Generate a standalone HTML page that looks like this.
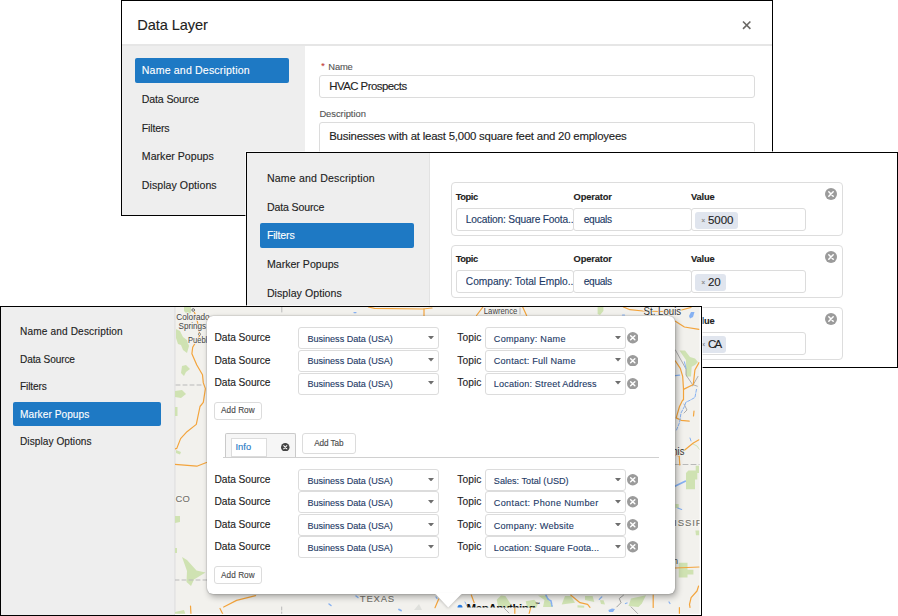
<!DOCTYPE html>
<html><head><meta charset="utf-8"><title>Data Layer</title>
<style>
*{box-sizing:border-box;margin:0;padding:0}
html,body{width:898px;height:616px;overflow:hidden;background:#fff;font-family:"Liberation Sans",sans-serif;color:#222}
.p{position:absolute;border:1px solid #000;background:#fff;overflow:hidden;box-shadow:0 0 0 1px rgba(255,255,255,.6)}
.a{position:absolute;white-space:nowrap;line-height:1}
.t{-webkit-text-stroke:0.12px currentColor}
.side{position:absolute;background:#eeeeee}
.sel{position:absolute;background:#1e79c4;border-radius:2px}
.inp{position:absolute;border:1px solid #dcdcdc;border-radius:3px;background:#fff;overflow:hidden}
.card{position:absolute;border:1px solid #dddddd;border-radius:4px;background:#fff}
.chip{position:absolute;background:#e0e5ee;border-radius:3px}
.btn{position:absolute;border:1px solid #dcdcdc;border-radius:3px;background:#fff}
.b{font-weight:bold}
</style></head><body>
<div class="p" style="left:121px;top:0px;width:652px;height:216px">
<div class="a t " style="left:15.30px;top:16px;font-size:14.6px;line-height:16px;height:16px;letter-spacing:-0.091px;">Data Layer</div>
<svg class="a" style="left:619px;top:18px" width="12" height="12" viewBox="0 0 12 12"><path d="M2.0 2.5L9.4 9.9M9.4 2.5L2.0 9.9" stroke="#6b6966" stroke-width="1.6" fill="none"/></svg>
<div class="a" style="left:0px;top:43px;width:650px;height:2px;background:#e6e6e6"></div>
<div class="side" style="left:0px;top:45px;width:183px;height:169px;"></div>
<div class="sel" style="left:13px;top:57px;width:154px;height:25px;"></div>
<div class="a t " style="left:19.80px;top:63px;font-size:10.6px;line-height:12px;height:12px;color:#fff;letter-spacing:0.159px;">Name and Description</div>
<div class="a t " style="left:19.80px;top:92px;font-size:10.6px;line-height:12px;height:12px;letter-spacing:-0.142px;">Data Source</div>
<div class="a t " style="left:19.80px;top:121px;font-size:10.6px;line-height:12px;height:12px;letter-spacing:-0.176px;">Filters</div>
<div class="a t " style="left:19.80px;top:149px;font-size:10.6px;line-height:12px;height:12px;letter-spacing:0.010px;">Marker Popups</div>
<div class="a t " style="left:19.80px;top:178px;font-size:10.6px;line-height:12px;height:12px;letter-spacing:0.048px;">Display Options</div>
<div class="a t " style="left:199.20px;top:60px;font-size:9px;line-height:10px;height:10px;color:#c23934;">*</div>
<div class="a t " style="left:206.30px;top:60px;font-size:9.4px;line-height:11px;height:11px;color:#555;letter-spacing:-0.192px;">Name</div>
<div class="inp" style="left:197px;top:74px;width:436px;height:23px;"></div>
<div class="a t " style="left:207.20px;top:79px;font-size:11.4px;line-height:12px;height:12px;letter-spacing:-0.514px;">HVAC Prospects</div>
<div class="a t " style="left:197.40px;top:107px;font-size:9.4px;line-height:11px;height:11px;color:#555;letter-spacing:-0.042px;">Description</div>
<div class="inp" style="left:197px;top:121px;width:436px;height:68px;"></div>
<div class="a t " style="left:207.20px;top:129px;font-size:11.4px;line-height:12px;height:12px;letter-spacing:-0.209px;">Businesses with at least 5,000 square feet and 20 employees</div>
</div>
<div class="p" style="left:246px;top:152px;width:652px;height:216px">
<div class="side" style="left:0px;top:0px;width:183px;height:214px;border-right:1px solid #e2e2e2"></div>
<div class="sel" style="left:13px;top:70px;width:154px;height:25px;"></div>
<div class="a t " style="left:19.90px;top:19px;font-size:10.6px;line-height:12px;height:12px;letter-spacing:0.159px;">Name and Description</div>
<div class="a t " style="left:19.90px;top:48px;font-size:10.6px;line-height:12px;height:12px;letter-spacing:-0.142px;">Data Source</div>
<div class="a t " style="left:19.90px;top:76px;font-size:10.6px;line-height:12px;height:12px;color:#fff;letter-spacing:-0.176px;">Filters</div>
<div class="a t " style="left:19.90px;top:105px;font-size:10.6px;line-height:12px;height:12px;letter-spacing:0.010px;">Marker Popups</div>
<div class="a t " style="left:19.90px;top:134px;font-size:10.6px;line-height:12px;height:12px;letter-spacing:0.048px;">Display Options</div>
<div class="card" style="left:204px;top:29px;width:392px;height:54px;"></div>
<div class="a t b" style="left:208.70px;top:39px;font-size:9.3px;line-height:10px;height:10px;color:#222;letter-spacing:-0.427px;">Topic</div>
<div class="a t b" style="left:326.60px;top:39px;font-size:9.3px;line-height:10px;height:10px;color:#222;letter-spacing:-0.139px;">Operator</div>
<div class="a t b" style="left:444.10px;top:39px;font-size:9.3px;line-height:10px;height:10px;color:#222;letter-spacing:-0.200px;">Value</div>
<div class="inp" style="left:209px;top:55px;width:118px;height:23px;"></div>
<div class="inp" style="left:326px;top:55px;width:119px;height:23px;"></div>
<div class="inp" style="left:444px;top:55px;width:115px;height:23px;"></div>
<div class="a t " style="left:218.80px;top:61px;font-size:10.2px;line-height:11px;height:11px;color:#1d3a66;letter-spacing:-0.168px;width:107.4px;overflow:hidden;">Location: Square Foota...</div>
<div class="a t " style="left:336.70px;top:61px;font-size:10.2px;line-height:11px;height:11px;color:#1d3a66;letter-spacing:-0.311px;">equals</div>
<div class="chip" style="left:448px;top:59px;width:43px;height:17px;"></div>
<div class="a t " style="left:454.20px;top:64px;font-size:7px;line-height:7px;height:7px;color:#888;">×</div>
<div class="a t " style="left:461.00px;top:61px;font-size:11.5px;line-height:12px;height:12px;color:#222;letter-spacing:-0.061px;">5000</div>
<svg class="a" style="left:578.3px;top:35.4px" width="12" height="12" viewBox="0 0 12 12"><circle cx="6" cy="6" r="6" fill="#9b9b9b"/><path d="M3.8 3.8L8.2 8.2M8.2 3.8L3.8 8.2" stroke="#fff" stroke-width="1.5" stroke-linecap="round"/></svg>
<div class="card" style="left:204px;top:92px;width:392px;height:53px;"></div>
<div class="a t b" style="left:208.70px;top:101px;font-size:9.3px;line-height:10px;height:10px;color:#222;letter-spacing:-0.427px;">Topic</div>
<div class="a t b" style="left:326.60px;top:101px;font-size:9.3px;line-height:10px;height:10px;color:#222;letter-spacing:-0.139px;">Operator</div>
<div class="a t b" style="left:444.10px;top:101px;font-size:9.3px;line-height:10px;height:10px;color:#222;letter-spacing:-0.200px;">Value</div>
<div class="inp" style="left:209px;top:117px;width:118px;height:23px;"></div>
<div class="inp" style="left:326px;top:117px;width:119px;height:23px;"></div>
<div class="inp" style="left:444px;top:117px;width:115px;height:23px;"></div>
<div class="a t " style="left:218.80px;top:123px;font-size:10.2px;line-height:11px;height:11px;color:#1d3a66;letter-spacing:-0.020px;width:107.4px;overflow:hidden;">Company: Total Emplo...</div>
<div class="a t " style="left:336.70px;top:123px;font-size:10.2px;line-height:11px;height:11px;color:#1d3a66;letter-spacing:-0.311px;">equals</div>
<div class="chip" style="left:448px;top:121px;width:30.5px;height:17px;"></div>
<div class="a t " style="left:454.20px;top:126px;font-size:7px;line-height:7px;height:7px;color:#888;">×</div>
<div class="a t " style="left:461.00px;top:123px;font-size:11.5px;line-height:12px;height:12px;color:#222;letter-spacing:-0.092px;">20</div>
<svg class="a" style="left:578.3px;top:98.4px" width="12" height="12" viewBox="0 0 12 12"><circle cx="6" cy="6" r="6" fill="#9b9b9b"/><path d="M3.8 3.8L8.2 8.2M8.2 3.8L3.8 8.2" stroke="#fff" stroke-width="1.5" stroke-linecap="round"/></svg>
<div class="card" style="left:204px;top:154px;width:392px;height:53px;"></div>
<div class="a t b" style="left:208.70px;top:163px;font-size:9.3px;line-height:10px;height:10px;color:#222;letter-spacing:-0.427px;">Topic</div>
<div class="a t b" style="left:326.60px;top:163px;font-size:9.3px;line-height:10px;height:10px;color:#222;letter-spacing:-0.139px;">Operator</div>
<div class="a t b" style="left:444.10px;top:163px;font-size:9.3px;line-height:10px;height:10px;color:#222;letter-spacing:-0.200px;">Value</div>
<div class="inp" style="left:209px;top:179px;width:118px;height:23px;"></div>
<div class="inp" style="left:326px;top:179px;width:119px;height:23px;"></div>
<div class="inp" style="left:444px;top:179px;width:115px;height:23px;"></div>
<div class="a t " style="left:218.80px;top:185px;font-size:10.2px;line-height:11px;height:11px;color:#1d3a66;width:107.4px;overflow:hidden;">Location: State</div>
<div class="a t " style="left:336.70px;top:185px;font-size:10.2px;line-height:11px;height:11px;color:#1d3a66;letter-spacing:-0.311px;">equals</div>
<div class="chip" style="left:448px;top:183px;width:31px;height:17px;"></div>
<div class="a t " style="left:454.20px;top:188px;font-size:7px;line-height:7px;height:7px;color:#888;">×</div>
<div class="a t " style="left:461.00px;top:185px;font-size:11.5px;line-height:12px;height:12px;color:#222;letter-spacing:-1.775px;">CA</div>
<svg class="a" style="left:578.3px;top:160.4px" width="12" height="12" viewBox="0 0 12 12"><circle cx="6" cy="6" r="6" fill="#9b9b9b"/><path d="M3.8 3.8L8.2 8.2M8.2 3.8L3.8 8.2" stroke="#fff" stroke-width="1.5" stroke-linecap="round"/></svg>
</div>
<div class="p" style="left:0px;top:306px;width:702px;height:310px">
<div class="side" style="left:0px;top:0px;width:174px;height:308px;border-right:1px solid #e4e4e4"></div>
<div class="sel" style="left:12px;top:95px;width:148px;height:24px;"></div>
<div class="a t " style="left:19.00px;top:19px;font-size:10.1px;line-height:11px;height:11px;letter-spacing:0.146px;">Name and Description</div>
<div class="a t " style="left:19.00px;top:47px;font-size:10.1px;line-height:11px;height:11px;letter-spacing:-0.114px;">Data Source</div>
<div class="a t " style="left:19.00px;top:74px;font-size:10.1px;line-height:11px;height:11px;letter-spacing:-0.116px;">Filters</div>
<div class="a t " style="left:19.00px;top:102px;font-size:10.1px;line-height:11px;height:11px;color:#fff;letter-spacing:0.068px;">Marker Popups</div>
<div class="a t " style="left:19.00px;top:129px;font-size:10.1px;line-height:11px;height:11px;letter-spacing:0.062px;">Display Options</div>
<svg class="a" style="left:174px;top:0px" width="526" height="309" viewBox="175 307 526 309">
<rect x="175" y="307" width="526" height="309" fill="#f2f1ed"/>
<rect x="175" y="307" width="0.6" height="309" fill="#e2e2e2"/>
<polygon points="184,307 191,307 191,313 187,314 184,311" fill="#cfe2b2"/>
<polygon points="176,329 180,331 183,337 187,340 189,346 187,353 183,350 181,345 178,344 176,338" fill="#cfe2b2"/>
<polygon points="182,366 186,365 190,369 186,372 184,376 181,373" fill="#cfe2b2"/>
<polygon points="175,391 182,390 186,394 181,398 175,397" fill="#cfe2b2"/>
<polygon points="175,407 177.5,407 177.5,416 175,416" fill="#cfe2b2"/>
<polygon points="176,450 181,452 180,454.5 176,453" fill="#cfe2b2"/>
<polygon points="175,516 180,516 180,522 175,523" fill="#cfe2b2"/>
<polygon points="175,548 177,548 177,553 175,553" fill="#cfe2b2"/>
<polygon points="182,557 187,560 196.5,570.5 205.5,572.5 194,579.5 191,586 186.5,582 187,571" fill="#cfe2b2"/>
<polygon points="175,612 184,610 186,616 175,616" fill="#cfe2b2"/>
<polygon points="496.7,599.8 501,595.4 505.4,596 511.2,604.8 509,608 498,606" fill="#cfe2b2"/>
<polygon points="525.7,601.2 534.3,599.8 538,604 536,608 527,607" fill="#cfe2b2"/>
<polygon points="538,595.4 546,595.4 553.2,607 543,607 544.5,600" fill="#cfe2b2"/>
<polygon points="561.7,604.4 565,596 570.9,596 575,602.7" fill="#cfe2b2"/>
<polygon points="577.5,605.2 584.2,605.8 584.2,607.7 577.5,607.5" fill="#cfe2b2"/>
<polygon points="585,596 592.6,596 594.3,601.9 585,600" fill="#cfe2b2"/>
<polygon points="600,600.2 603.5,600.2 605,604.4 601,604" fill="#cfe2b2"/>
<polygon points="628.5,606 631,598.5 646,595.2 641.9,603.5 638.5,606.9" fill="#cfe2b2"/>
<polygon points="679.5,350.5 685,350.5 690,357 695,358.5 698,362 695,365 691.7,366.7 691,376.5 686,376.5 686,360 682.7,355.3" fill="#cfe2b2"/>
<polygon points="688.4,470.6 695.7,470.6 695.7,465.7 699,465.7 699,473 697.3,473 697.3,479.5 695,479.5 695,489.3 686,489.3 686,473" fill="#cfe2b2"/>
<polygon points="675.5,504 678.7,504 678.7,508 675.5,508" fill="#cfe2b2"/>
<polygon points="695.4,530.4 699.3,530.4 699.3,535.3 696,535.3" fill="#cfe2b2"/>
<polygon points="678.7,562.8 687.5,562.8 687.5,569.7 693.4,569.7 693.4,574.6 687.5,574.6 687.5,577.5 678.7,577.5" fill="#cfe2b2"/>
<polyline points="693,444 697,446 699.5,449.5" fill="none" stroke="#cfe2b2" stroke-width="1" stroke-linejoin="round" stroke-linecap="round" />
<polyline points="176,385 204,385" fill="none" stroke="#b9b9b9" stroke-width="1" stroke-linejoin="round" stroke-linecap="round" stroke-dasharray="4 3"/>
<polyline points="175,580 208,580" fill="none" stroke="#b9b9b9" stroke-width="1" stroke-linejoin="round" stroke-linecap="round" stroke-dasharray="4 3"/>
<polyline points="675,464.5 700,464.5" fill="none" stroke="#b9b9b9" stroke-width="1" stroke-linejoin="round" stroke-linecap="round" stroke-dasharray="5 3"/>
<polyline points="281.7,607 281.7,616" fill="none" stroke="#b9b9b9" stroke-width="1" stroke-linejoin="round" stroke-linecap="round" stroke-dasharray="3 2"/>
<polyline points="675.4,350 686,369 686,375 692.5,384.5 697.3,386.2" fill="none" stroke="#9a9a9a" stroke-width="0.8" stroke-linejoin="round" stroke-linecap="round" />
<polyline points="698,376.4 692.5,386" fill="none" stroke="#9a9a9a" stroke-width="0.8" stroke-linejoin="round" stroke-linecap="round" />
<polyline points="684,404 687,410 684,413" fill="none" stroke="#9a9a9a" stroke-width="0.8" stroke-linejoin="round" stroke-linecap="round" />
<polyline points="194.4,312.3 197,320 199.2,329.4 199.5,336 192.7,347.2 191.9,353.7 196.8,365 202.5,374.8 203.3,382.9 205.4,388.6 203.3,402.4 200,406.5 196.3,424.4 187,431.7 180.6,438.6 176.8,448.4 175,449" fill="none" stroke="#f3a43c" stroke-width="1.2" stroke-linejoin="round" stroke-linecap="round" />
<polyline points="175,464.4 196.8,466.2 206.5,462.5" fill="none" stroke="#f3a43c" stroke-width="1.2" stroke-linejoin="round" stroke-linecap="round" />
<polyline points="223,614.5 220,608.5" fill="none" stroke="#f3a43c" stroke-width="1.2" stroke-linejoin="round" stroke-linecap="round" />
<polyline points="223.7,607 236.6,600.4 255.6,595.6" fill="none" stroke="#f3a43c" stroke-width="1.2" stroke-linejoin="round" stroke-linecap="round" />
<polyline points="190.5,606 191,615" fill="none" stroke="#f3a43c" stroke-width="1.2" stroke-linejoin="round" stroke-linecap="round" />
<polyline points="368.4,307 374.4,308.4 422.6,309 432,308" fill="none" stroke="#f3a43c" stroke-width="1.2" stroke-linejoin="round" stroke-linecap="round" />
<polyline points="424,309 424,316" fill="none" stroke="#f3a43c" stroke-width="1.2" stroke-linejoin="round" stroke-linecap="round" />
<polyline points="476.5,315.5 483,307" fill="none" stroke="#f3a43c" stroke-width="1.2" stroke-linejoin="round" stroke-linecap="round" />
<polyline points="522.7,307 526.6,315.5" fill="none" stroke="#f3a43c" stroke-width="1.2" stroke-linejoin="round" stroke-linecap="round" />
<polyline points="623.4,307 629.9,309.7 642.8,311 660,311.5 672,311 681.5,310 691,307.5" fill="none" stroke="#f3a43c" stroke-width="1.2" stroke-linejoin="round" stroke-linecap="round" />
<polyline points="675.4,321.2 684.4,327 699,329.4" fill="none" stroke="#f3a43c" stroke-width="1.2" stroke-linejoin="round" stroke-linecap="round" />
<polyline points="281.8,307 281.8,312" fill="none" stroke="#b9b9b9" stroke-width="1" stroke-linejoin="round" stroke-linecap="round" />
<polyline points="520,308 520,314" fill="none" stroke="#b9b9b9" stroke-width="1" stroke-linejoin="round" stroke-linecap="round" />
<polygon points="597.6,307 603.4,307 603.4,311 600,315 597.6,314" fill="#cfe2b2"/>
<polyline points="354,312.6 356,312.6" fill="none" stroke="#86b1f2" stroke-width="1.2" stroke-linejoin="round" stroke-linecap="round" />
<polyline points="622.5,315 624.5,315" fill="none" stroke="#86b1f2" stroke-width="1.2" stroke-linejoin="round" stroke-linecap="round" />
<polyline points="675.4,361 680.3,368.3 682.7,376.4 683.5,389.4 683.5,400 682.7,400 679.5,406.5 676.2,417.9 681.1,420.3 689.2,421.1" fill="none" stroke="#f3a43c" stroke-width="1.2" stroke-linejoin="round" stroke-linecap="round" />
<polyline points="699,362.6 694.9,370 693.3,384.5 683.5,389.4" fill="none" stroke="#f3a43c" stroke-width="1.2" stroke-linejoin="round" stroke-linecap="round" />
<polyline points="694,411 693.5,416" fill="none" stroke="#f3a43c" stroke-width="1.2" stroke-linejoin="round" stroke-linecap="round" />
<polyline points="699,439.8 693.3,443 684.4,450.3 675.4,455.2 679.2,456 679.8,465" fill="none" stroke="#f3a43c" stroke-width="1.2" stroke-linejoin="round" stroke-linecap="round" />
<polyline points="675,568 699.3,567" fill="none" stroke="#f3a43c" stroke-width="1.2" stroke-linejoin="round" stroke-linecap="round" />
<polyline points="471.3,595 474.2,602.7" fill="none" stroke="#f3a43c" stroke-width="1.2" stroke-linejoin="round" stroke-linecap="round" />
<polyline points="438.7,599 435,607.7" fill="none" stroke="#f3a43c" stroke-width="1.2" stroke-linejoin="round" stroke-linecap="round" />
<polyline points="514.8,608 514.8,616" fill="none" stroke="#f3a43c" stroke-width="1.2" stroke-linejoin="round" stroke-linecap="round" />
<polyline points="530.7,607.7 528.5,616" fill="none" stroke="#f3a43c" stroke-width="1.2" stroke-linejoin="round" stroke-linecap="round" />
<polyline points="570.9,595.2 580,602.7 587.6,604.4 590,607.4" fill="none" stroke="#f3a43c" stroke-width="1.2" stroke-linejoin="round" stroke-linecap="round" />
<polyline points="653.2,595 653.2,607.4" fill="none" stroke="#f3a43c" stroke-width="1.2" stroke-linejoin="round" stroke-linecap="round" />
<polyline points="504,608 509,613" fill="none" stroke="#9a9a9a" stroke-width="0.8" stroke-linejoin="round" stroke-linecap="round" />
<polyline points="623.5,595.2 619.3,598.5 621,602.7 616.8,606.9" fill="none" stroke="#8a8a8a" stroke-width="0.8" stroke-linejoin="round" stroke-linecap="round" />
<polyline points="631,606.9 638.5,614.4" fill="none" stroke="#9a9a9a" stroke-width="0.8" stroke-linejoin="round" stroke-linecap="round" />
<polygon points="689,316 691,312 694.5,312 693,317 690,318.5" fill="#86b1f2"/>
<polyline points="684.4,361.8 686,368.3" fill="none" stroke="#86b1f2" stroke-width="1" stroke-linejoin="round" stroke-linecap="round" />
<polyline points="696.5,389.4 694.9,397.5 689,400.8 686,402 684.4,406.5 681,413 679.5,422.7 676.2,430.8" fill="none" stroke="#86b1f2" stroke-width="1" stroke-linejoin="round" stroke-linecap="round" stroke-dasharray="3 1.5"/>
<polyline points="675.4,375.6 679.5,375.2" fill="none" stroke="#86b1f2" stroke-width="1.2" stroke-linejoin="round" stroke-linecap="round" />
<polyline points="675.4,486 685.2,481.2" fill="none" stroke="#86b1f2" stroke-width="1.8" stroke-linejoin="round" stroke-linecap="round" />
<polyline points="677.7,508 681.6,509.5" fill="none" stroke="#86b1f2" stroke-width="1.2" stroke-linejoin="round" stroke-linecap="round" />
<polyline points="690,438 691,441" fill="none" stroke="#86b1f2" stroke-width="1" stroke-linejoin="round" stroke-linecap="round" />
<polyline points="329,604 331,605.5" fill="none" stroke="#86b1f2" stroke-width="1.5" stroke-linejoin="round" stroke-linecap="round" />
<polyline points="356,596 358,597.5" fill="none" stroke="#86b1f2" stroke-width="1.5" stroke-linejoin="round" stroke-linecap="round" />
<polyline points="399,609.5 401,610.5" fill="none" stroke="#86b1f2" stroke-width="1.8" stroke-linejoin="round" stroke-linecap="round" />
<polygon points="414,610 419,604 422,610" fill="#dfe0dc"/>
<polyline points="546,595.4 548,599 551,601 552,606" fill="none" stroke="#86b1f2" stroke-width="1.6" stroke-linejoin="round" stroke-linecap="round" stroke-dasharray="2 1"/>
<polyline points="599.3,599.4 601.8,596.9" fill="none" stroke="#86b1f2" stroke-width="1.3" stroke-linejoin="round" stroke-linecap="round" />
<polygon points="608.4,610 612,608.5 615,609 613,611.9 609,612" fill="#86b1f2"/>
<polyline points="625.5,603.5 627,603" fill="none" stroke="#86b1f2" stroke-width="1.3" stroke-linejoin="round" stroke-linecap="round" />
<polyline points="669,602 670,603.5" fill="none" stroke="#86b1f2" stroke-width="1.2" stroke-linejoin="round" stroke-linecap="round" />
<polyline points="436,597 437,598.5" fill="none" stroke="#86b1f2" stroke-width="1.2" stroke-linejoin="round" stroke-linecap="round" />
<polyline points="465,602 467,606" fill="none" stroke="#86b1f2" stroke-width="1" stroke-linejoin="round" stroke-linecap="round" stroke-dasharray="2 1"/>
<polyline points="679.4,607.7 679.4,616" fill="none" stroke="#f3a43c" stroke-width="1.2" stroke-linejoin="round" stroke-linecap="round" />
<polyline points="698.6,586 697,591 691.1,597.7 689.5,604.4 690,607.4" fill="none" stroke="#f3a43c" stroke-width="1.2" stroke-linejoin="round" stroke-linecap="round" />
<circle cx="193.2" cy="310" r="1.3" fill="#fff" stroke="#444" stroke-width="0.8"/>
<circle cx="199.5" cy="334.2" r="1.1" fill="#fff" stroke="#666" stroke-width="0.7"/>
<text x="176.3" y="320.0" font-size="9" fill="#444" font-family="Liberation Sans, sans-serif" stroke="#f4f3ef" stroke-width="1.4" paint-order="stroke"  textLength="33.3" lengthAdjust="spacingAndGlyphs">Colorado</text>
<text x="178.5" y="329.0" font-size="9" fill="#444" font-family="Liberation Sans, sans-serif" stroke="#f4f3ef" stroke-width="1.4" paint-order="stroke"  textLength="27.6" lengthAdjust="spacingAndGlyphs">Springs</text>
<text x="188" y="343" font-size="9" fill="#444" font-family="Liberation Sans, sans-serif" stroke="#f4f3ef" stroke-width="1.4" paint-order="stroke"  textLength="23.5" lengthAdjust="spacingAndGlyphs">Pueblo</text>
<text x="483.8" y="314" font-size="8.8" fill="#444" font-family="Liberation Sans, sans-serif" stroke="#f4f3ef" stroke-width="1.4" paint-order="stroke"  textLength="33.5" lengthAdjust="spacingAndGlyphs">Lawrence</text>
<text x="643.6" y="314.6" font-size="10.6" fill="#333" font-family="Liberation Sans, sans-serif" stroke="#f4f3ef" stroke-width="1.4" paint-order="stroke"  textLength="37.6" lengthAdjust="spacingAndGlyphs">St. Louis</text>
<text x="646.5" y="454.8" font-size="10.6" fill="#333" font-family="Liberation Sans, sans-serif" stroke="#f4f3ef" stroke-width="1.4" paint-order="stroke"  textLength="37.8" lengthAdjust="spacingAndGlyphs">Memphis</text>
<text x="647" y="564" font-size="9.5" fill="#333" font-family="Liberation Sans, sans-serif" stroke="#f4f3ef" stroke-width="1.4" paint-order="stroke"  textLength="31" lengthAdjust="spacingAndGlyphs">Jackson</text>
<text x="175.6" y="502.4" font-size="9.4" fill="none" font-family="Liberation Sans, sans-serif" stroke="#f6f5f1" stroke-width="2" letter-spacing="0.2">CO</text>
<text x="175.6" y="502.4" font-size="9.4" fill="#73716a" font-family="Liberation Sans, sans-serif" stroke="#73716a" stroke-width="0.12" letter-spacing="0.2">CO</text>
<text x="359.8" y="602" font-size="9.5" fill="none" font-family="Liberation Sans, sans-serif" stroke="#f6f5f1" stroke-width="2" letter-spacing="0.8">TEXAS</text>
<text x="359.8" y="602" font-size="9.5" fill="#73716a" font-family="Liberation Sans, sans-serif" stroke="#73716a" stroke-width="0.12" letter-spacing="0.8">TEXAS</text>
<text x="647.3" y="525.9" font-size="9.5" fill="none" font-family="Liberation Sans, sans-serif" stroke="#f6f5f1" stroke-width="2" letter-spacing="0.9">MISSISSIPPI</text>
<text x="647.3" y="525.9" font-size="9.5" fill="#73716a" font-family="Liberation Sans, sans-serif" stroke="#73716a" stroke-width="0.12" letter-spacing="0.9">MISSISSIPPI</text>
<clipPath id="mc"><rect x="450" y="600" width="110" height="7.6"/></clipPath>
<g clip-path="url(#mc)"><circle cx="460" cy="607.2" r="2.5" fill="#2a7de1"/>
<text x="466.6" y="611.8" font-size="11.6" font-weight="bold" fill="#111" font-family="Liberation Sans, sans-serif" textLength="73.5" lengthAdjust="spacing">MapAnything<tspan font-size="5" dy="-6">™</tspan></text></g>
<rect x="699.6" y="307" width="2" height="309" fill="#fff"/><rect x="175" y="613.8" width="526" height="3" fill="#fff"/>
</svg>
<div class="a" style="left:206px;top:9px;width:468px;height:278px;background:#fff;border-radius:6px;box-shadow:0 0 1.5px rgba(0,0,0,.45),2px 3px 6px rgba(0,0,0,.3)"></div>
<svg class="a" style="left:434px;top:286px;overflow:visible" width="27" height="16" viewBox="0 0 27 16"><defs><filter id="ps" x="-30%" y="-30%" width="160%" height="180%"><feGaussianBlur stdDeviation="1.6"/></filter></defs><path d="M1 2H26L13.2 15.2Z" fill="#000" opacity=".22" filter="url(#ps)"/><path d="M0 0H27V1.3H26.2L13.2 14.4L0.8 1.3H0Z" fill="#fff"/></svg>
<div class="a t " style="left:213.50px;top:25px;font-size:10.2px;line-height:11px;height:11px;color:#222;letter-spacing:-0.060px;">Data Source</div>
<div class="inp" style="left:297px;top:20.3px;width:141px;height:22px;"></div>
<div class="a t " style="left:306.50px;top:27px;font-size:9.1px;line-height:10px;height:10px;color:#1d3a66;letter-spacing:-0.032px;">Business Data (USA)</div>
<svg class="a" style="left:426.8px;top:28.95px" width="6" height="3.5" viewBox="0 0 6 3.5"><path d="M0 0H6L3 3.5Z" fill="#6e6e6e"/></svg>
<div class="a t " style="left:456.30px;top:25px;font-size:10.2px;line-height:11px;height:11px;color:#222;letter-spacing:0.072px;">Topic</div>
<div class="inp" style="left:484px;top:20.3px;width:141px;height:22px;"></div>
<div class="a t " style="left:492.80px;top:27px;font-size:9.1px;line-height:10px;height:10px;color:#1d3a66;letter-spacing:0.285px;">Company: Name</div>
<svg class="a" style="left:613.5px;top:28.95px" width="6" height="3.5" viewBox="0 0 6 3.5"><path d="M0 0H6L3 3.5Z" fill="#6e6e6e"/></svg>
<svg class="a" style="left:625.95px;top:25.35px" width="11.5" height="11.5" viewBox="0 0 12 12"><circle cx="6" cy="6" r="6" fill="#9b9b9b"/><path d="M3.8 3.8L8.2 8.2M8.2 3.8L3.8 8.2" stroke="#fff" stroke-width="1.5" stroke-linecap="round"/></svg>
<div class="a t " style="left:213.50px;top:48px;font-size:10.2px;line-height:11px;height:11px;color:#222;letter-spacing:-0.060px;">Data Source</div>
<div class="inp" style="left:297px;top:42.8px;width:141px;height:22px;"></div>
<div class="a t " style="left:306.50px;top:49px;font-size:9.1px;line-height:10px;height:10px;color:#1d3a66;letter-spacing:-0.032px;">Business Data (USA)</div>
<svg class="a" style="left:426.8px;top:51.45px" width="6" height="3.5" viewBox="0 0 6 3.5"><path d="M0 0H6L3 3.5Z" fill="#6e6e6e"/></svg>
<div class="a t " style="left:456.30px;top:48px;font-size:10.2px;line-height:11px;height:11px;color:#222;letter-spacing:0.072px;">Topic</div>
<div class="inp" style="left:484px;top:42.8px;width:141px;height:22px;"></div>
<div class="a t " style="left:492.80px;top:49px;font-size:9.1px;line-height:10px;height:10px;color:#1d3a66;letter-spacing:0.225px;">Contact: Full Name</div>
<svg class="a" style="left:613.5px;top:51.45px" width="6" height="3.5" viewBox="0 0 6 3.5"><path d="M0 0H6L3 3.5Z" fill="#6e6e6e"/></svg>
<svg class="a" style="left:625.95px;top:47.85px" width="11.5" height="11.5" viewBox="0 0 12 12"><circle cx="6" cy="6" r="6" fill="#9b9b9b"/><path d="M3.8 3.8L8.2 8.2M8.2 3.8L3.8 8.2" stroke="#fff" stroke-width="1.5" stroke-linecap="round"/></svg>
<div class="a t " style="left:213.50px;top:70px;font-size:10.2px;line-height:11px;height:11px;color:#222;letter-spacing:-0.060px;">Data Source</div>
<div class="inp" style="left:297px;top:65.5px;width:141px;height:22px;"></div>
<div class="a t " style="left:306.50px;top:72px;font-size:9.1px;line-height:10px;height:10px;color:#1d3a66;letter-spacing:-0.032px;">Business Data (USA)</div>
<svg class="a" style="left:426.8px;top:74.15px" width="6" height="3.5" viewBox="0 0 6 3.5"><path d="M0 0H6L3 3.5Z" fill="#6e6e6e"/></svg>
<div class="a t " style="left:456.30px;top:70px;font-size:10.2px;line-height:11px;height:11px;color:#222;letter-spacing:0.072px;">Topic</div>
<div class="inp" style="left:484px;top:65.5px;width:141px;height:22px;"></div>
<div class="a t " style="left:492.80px;top:72px;font-size:9.1px;line-height:10px;height:10px;color:#1d3a66;letter-spacing:0.163px;">Location: Street Address</div>
<svg class="a" style="left:613.5px;top:74.15px" width="6" height="3.5" viewBox="0 0 6 3.5"><path d="M0 0H6L3 3.5Z" fill="#6e6e6e"/></svg>
<svg class="a" style="left:625.95px;top:70.55px" width="11.5" height="11.5" viewBox="0 0 12 12"><circle cx="6" cy="6" r="6" fill="#9b9b9b"/><path d="M3.8 3.8L8.2 8.2M8.2 3.8L3.8 8.2" stroke="#fff" stroke-width="1.5" stroke-linecap="round"/></svg>
<div class="btn" style="left:213px;top:95px;width:48px;height:17.5px;"></div>
<div class="a t " style="left:220.00px;top:99px;font-size:8.2px;line-height:9px;height:9px;color:#4a4a4a;letter-spacing:0.071px;">Add Row</div>
<div class="a" style="left:224px;top:126px;width:71px;height:25px;background:#f6f6f6;border:1px solid #cacaca;border-bottom:none;border-radius:2px 2px 0 0"></div>
<div class="a" style="left:222px;top:150px;width:436px;height:1px;background:#d0d0d0"></div>
<div class="inp" style="left:230px;top:131px;width:36px;height:18.5px;border-radius:0"></div>
<div class="a t " style="left:234.40px;top:135px;font-size:9.3px;line-height:10px;height:10px;color:#1e79c4;letter-spacing:0.063px;">Info</div>
<svg class="a" style="left:280.45px;top:135.65px" width="8.5" height="8.5" viewBox="0 0 12 12"><circle cx="6" cy="6" r="6" fill="#444"/><path d="M3.8 3.8L8.2 8.2M8.2 3.8L3.8 8.2" stroke="#fff" stroke-width="1.5" stroke-linecap="round"/></svg>
<div class="btn" style="left:301px;top:126px;width:54px;height:21px;"></div>
<div class="a t " style="left:313.20px;top:132px;font-size:8.2px;line-height:9px;height:9px;color:#4a4a4a;letter-spacing:-0.074px;">Add Tab</div>
<div class="a t " style="left:213.50px;top:167px;font-size:10.2px;line-height:11px;height:11px;color:#222;letter-spacing:-0.060px;">Data Source</div>
<div class="inp" style="left:297px;top:162px;width:141px;height:22px;"></div>
<div class="a t " style="left:306.50px;top:169px;font-size:9.1px;line-height:10px;height:10px;color:#1d3a66;letter-spacing:-0.032px;">Business Data (USA)</div>
<svg class="a" style="left:426.8px;top:170.65px" width="6" height="3.5" viewBox="0 0 6 3.5"><path d="M0 0H6L3 3.5Z" fill="#6e6e6e"/></svg>
<div class="a t " style="left:456.30px;top:167px;font-size:10.2px;line-height:11px;height:11px;color:#222;letter-spacing:0.072px;">Topic</div>
<div class="inp" style="left:484px;top:162px;width:141px;height:22px;"></div>
<div class="a t " style="left:492.80px;top:169px;font-size:9.1px;line-height:10px;height:10px;color:#1d3a66;letter-spacing:0.013px;">Sales: Total (USD)</div>
<svg class="a" style="left:613.5px;top:170.65px" width="6" height="3.5" viewBox="0 0 6 3.5"><path d="M0 0H6L3 3.5Z" fill="#6e6e6e"/></svg>
<svg class="a" style="left:625.95px;top:167.05px" width="11.5" height="11.5" viewBox="0 0 12 12"><circle cx="6" cy="6" r="6" fill="#9b9b9b"/><path d="M3.8 3.8L8.2 8.2M8.2 3.8L3.8 8.2" stroke="#fff" stroke-width="1.5" stroke-linecap="round"/></svg>
<div class="a t " style="left:213.50px;top:189px;font-size:10.2px;line-height:11px;height:11px;color:#222;letter-spacing:-0.060px;">Data Source</div>
<div class="inp" style="left:297px;top:184.4px;width:141px;height:22px;"></div>
<div class="a t " style="left:306.50px;top:191px;font-size:9.1px;line-height:10px;height:10px;color:#1d3a66;letter-spacing:-0.032px;">Business Data (USA)</div>
<svg class="a" style="left:426.8px;top:193.05px" width="6" height="3.5" viewBox="0 0 6 3.5"><path d="M0 0H6L3 3.5Z" fill="#6e6e6e"/></svg>
<div class="a t " style="left:456.30px;top:189px;font-size:10.2px;line-height:11px;height:11px;color:#222;letter-spacing:0.072px;">Topic</div>
<div class="inp" style="left:484px;top:184.4px;width:141px;height:22px;"></div>
<div class="a t " style="left:492.80px;top:191px;font-size:9.1px;line-height:10px;height:10px;color:#1d3a66;letter-spacing:0.344px;">Contact: Phone Number</div>
<svg class="a" style="left:613.5px;top:193.05px" width="6" height="3.5" viewBox="0 0 6 3.5"><path d="M0 0H6L3 3.5Z" fill="#6e6e6e"/></svg>
<svg class="a" style="left:625.95px;top:189.45px" width="11.5" height="11.5" viewBox="0 0 12 12"><circle cx="6" cy="6" r="6" fill="#9b9b9b"/><path d="M3.8 3.8L8.2 8.2M8.2 3.8L3.8 8.2" stroke="#fff" stroke-width="1.5" stroke-linecap="round"/></svg>
<div class="a t " style="left:213.50px;top:212px;font-size:10.2px;line-height:11px;height:11px;color:#222;letter-spacing:-0.060px;">Data Source</div>
<div class="inp" style="left:297px;top:207px;width:141px;height:22px;"></div>
<div class="a t " style="left:306.50px;top:214px;font-size:9.1px;line-height:10px;height:10px;color:#1d3a66;letter-spacing:-0.032px;">Business Data (USA)</div>
<svg class="a" style="left:426.8px;top:215.65px" width="6" height="3.5" viewBox="0 0 6 3.5"><path d="M0 0H6L3 3.5Z" fill="#6e6e6e"/></svg>
<div class="a t " style="left:456.30px;top:212px;font-size:10.2px;line-height:11px;height:11px;color:#222;letter-spacing:0.072px;">Topic</div>
<div class="inp" style="left:484px;top:207px;width:141px;height:22px;"></div>
<div class="a t " style="left:492.80px;top:214px;font-size:9.1px;line-height:10px;height:10px;color:#1d3a66;letter-spacing:0.226px;">Company: Website</div>
<svg class="a" style="left:613.5px;top:215.65px" width="6" height="3.5" viewBox="0 0 6 3.5"><path d="M0 0H6L3 3.5Z" fill="#6e6e6e"/></svg>
<svg class="a" style="left:625.95px;top:212.05px" width="11.5" height="11.5" viewBox="0 0 12 12"><circle cx="6" cy="6" r="6" fill="#9b9b9b"/><path d="M3.8 3.8L8.2 8.2M8.2 3.8L3.8 8.2" stroke="#fff" stroke-width="1.5" stroke-linecap="round"/></svg>
<div class="a t " style="left:213.50px;top:234px;font-size:10.2px;line-height:11px;height:11px;color:#222;letter-spacing:-0.060px;">Data Source</div>
<div class="inp" style="left:297px;top:229.4px;width:141px;height:22px;"></div>
<div class="a t " style="left:306.50px;top:236px;font-size:9.1px;line-height:10px;height:10px;color:#1d3a66;letter-spacing:-0.032px;">Business Data (USA)</div>
<svg class="a" style="left:426.8px;top:238.05px" width="6" height="3.5" viewBox="0 0 6 3.5"><path d="M0 0H6L3 3.5Z" fill="#6e6e6e"/></svg>
<div class="a t " style="left:456.30px;top:234px;font-size:10.2px;line-height:11px;height:11px;color:#222;letter-spacing:0.072px;">Topic</div>
<div class="inp" style="left:484px;top:229.4px;width:141px;height:22px;"></div>
<div class="a t " style="left:492.80px;top:236px;font-size:9.1px;line-height:10px;height:10px;color:#1d3a66;letter-spacing:0.134px;">Location: Square Foota...</div>
<svg class="a" style="left:613.5px;top:238.05px" width="6" height="3.5" viewBox="0 0 6 3.5"><path d="M0 0H6L3 3.5Z" fill="#6e6e6e"/></svg>
<svg class="a" style="left:625.95px;top:234.45px" width="11.5" height="11.5" viewBox="0 0 12 12"><circle cx="6" cy="6" r="6" fill="#9b9b9b"/><path d="M3.8 3.8L8.2 8.2M8.2 3.8L3.8 8.2" stroke="#fff" stroke-width="1.5" stroke-linecap="round"/></svg>
<div class="btn" style="left:213px;top:259px;width:48px;height:17.5px;"></div>
<div class="a t " style="left:220.00px;top:264px;font-size:8.2px;line-height:9px;height:9px;color:#4a4a4a;letter-spacing:0.071px;">Add Row</div>
</div>
</body></html>
